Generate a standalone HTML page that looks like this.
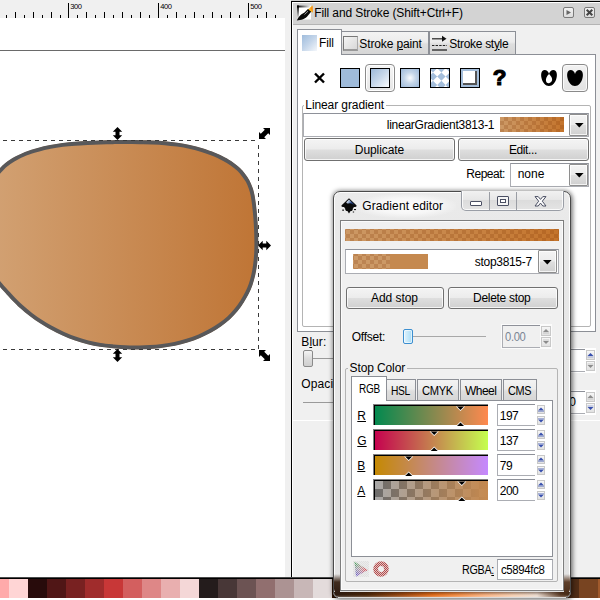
<!DOCTYPE html>
<html><head><meta charset="utf-8"><title>Inkscape</title>
<style>

html,body{margin:0;padding:0}
body{width:600px;height:600px;overflow:hidden;position:relative;background:#f0f0f0;font-family:"Liberation Sans",sans-serif;font-size:12px;color:#000}
div,span.t,svg{position:absolute;box-sizing:border-box}
span.t{white-space:nowrap;display:block}
u{text-decoration:underline;text-underline-offset:1px}
.btn{border:1px solid #707070;border-radius:3px;background:linear-gradient(#f4f4f4 0%,#ececec 48%,#dedede 52%,#d0d0d0 100%);box-shadow:inset 0 0 0 1px rgba(255,255,255,.75)}
.entry{background:#fff;border:1px solid #abadb3;border-top-color:#8e9199}
.sp{border:1px solid #c8c8c8;background:linear-gradient(#f6f6f6,#e2e2e2)}
.chk{background-image:repeating-conic-gradient(rgba(125,50,0,.2) 0% 25%,transparent 0% 50%),linear-gradient(90deg,var(--a,#cc9966),var(--b,#cc9966));background-size:8px 8px,100% 100%}
.chka{background-image:linear-gradient(90deg,rgba(197,137,79,0),rgba(197,137,79,1)),repeating-conic-gradient(#6c6c6c 0% 25%,#a8a8a8 0% 50%);background-size:100% 100%,16px 16px;background-position:0 0,1px 1px}
</style></head>
<body>
<svg width="285" height="577" viewBox="0 0 285 577" style="left:0;top:0">
<defs><linearGradient id="lg" gradientUnits="userSpaceOnUse" x1="-25" y1="0" x2="262" y2="0"><stop offset="0" stop-color="#d3a477"/><stop offset="1" stop-color="#bf7434"/></linearGradient>
<clipPath id="cp"><path d="M-12.00,182.00C-11.00,165.75 -8.00,176.83 -6.00,174.50C-4.00,172.17 -1.83,169.88 0.00,168.00C1.83,166.12 2.92,164.92 5.00,163.25C7.08,161.58 9.17,159.88 12.50,158.00C15.83,156.12 20.83,153.67 25.00,152.00C29.17,150.33 33.33,149.17 37.50,148.00C41.67,146.83 45.83,145.83 50.00,145.00C54.17,144.17 58.33,143.54 62.50,143.00C66.67,142.46 70.83,142.08 75.00,141.75C79.17,141.42 83.33,141.21 87.50,141.00C91.67,140.79 95.83,140.62 100.00,140.50C104.17,140.38 108.33,140.32 112.50,140.25C116.67,140.18 120.42,140.10 125.00,140.10C129.58,140.10 135.42,140.18 140.00,140.25C144.58,140.32 148.33,140.33 152.50,140.50C156.67,140.67 160.83,140.88 165.00,141.25C169.17,141.62 173.33,142.12 177.50,142.75C181.67,143.38 185.83,144.08 190.00,145.00C194.17,145.92 198.33,146.96 202.50,148.25C206.67,149.54 211.25,151.21 215.00,152.75C218.75,154.29 222.08,155.96 225.00,157.50C227.92,159.04 230.00,160.25 232.50,162.00C235.00,163.75 237.92,166.04 240.00,168.00C242.08,169.96 243.46,171.75 245.00,173.75C246.54,175.75 248.00,177.71 249.25,180.00C250.50,182.29 251.62,185.00 252.50,187.50C253.38,190.00 253.92,192.08 254.50,195.00C255.08,197.92 255.54,201.25 256.00,205.00C256.46,208.75 256.92,213.33 257.25,217.50C257.58,221.67 257.82,225.83 258.00,230.00C258.18,234.17 258.26,239.50 258.30,242.50C258.34,245.50 258.30,245.92 258.25,248.00C258.20,250.08 258.21,252.17 258.00,255.00C257.79,257.83 257.46,261.67 257.00,265.00C256.54,268.33 256.00,271.67 255.25,275.00C254.50,278.33 253.58,281.88 252.50,285.00C251.42,288.12 250.21,290.83 248.75,293.75C247.29,296.67 245.62,299.58 243.75,302.50C241.88,305.42 239.79,308.46 237.50,311.25C235.21,314.04 232.71,316.75 230.00,319.25C227.29,321.75 224.38,324.04 221.25,326.25C218.12,328.46 214.79,330.54 211.25,332.50C207.71,334.46 203.96,336.33 200.00,338.00C196.04,339.67 191.67,341.21 187.50,342.50C183.33,343.79 179.17,344.88 175.00,345.75C170.83,346.62 166.67,347.21 162.50,347.75C158.33,348.29 153.75,348.73 150.00,349.00C146.25,349.27 144.17,349.36 140.00,349.40C135.83,349.44 129.58,349.44 125.00,349.25C120.42,349.06 116.67,348.67 112.50,348.25C108.33,347.83 104.17,347.42 100.00,346.75C95.83,346.08 91.67,345.29 87.50,344.25C83.33,343.21 79.17,341.96 75.00,340.50C70.83,339.04 66.67,337.38 62.50,335.50C58.33,333.62 53.75,331.29 50.00,329.25C46.25,327.21 43.33,325.42 40.00,323.25C36.67,321.08 33.33,318.79 30.00,316.25C26.67,313.71 22.92,310.58 20.00,308.00C17.08,305.42 15.00,303.33 12.50,300.75C10.00,298.17 7.08,294.79 5.00,292.50C2.92,290.21 1.83,289.08 0.00,287.00C-1.83,284.92 -4.00,282.50 -6.00,280.00C-8.00,277.50 -11.00,288.33 -12.00,272.00C-13.00,255.67 -13.00,198.25 -12.00,182.00Z"/></clipPath></defs>
<rect x="0" y="0" width="285" height="18" fill="#f0f0f0"/>
<rect x="0" y="18" width="285" height="559" fill="#fff"/>
<g fill="#000"><rect x="60" y="15" width="1" height="3"/><rect x="51" y="12" width="1" height="6"/><rect x="42" y="15" width="1" height="3"/><rect x="33" y="12" width="1" height="6"/><rect x="24" y="15" width="1" height="3"/><rect x="15" y="12" width="1" height="6"/><rect x="6" y="15" width="1" height="3"/><rect x="68" y="3" width="1" height="15"/><rect x="77" y="15" width="1" height="3"/><rect x="86" y="12" width="1" height="6"/><rect x="95" y="15" width="1" height="3"/><rect x="104" y="12" width="1" height="6"/><rect x="113" y="15" width="1" height="3"/><rect x="122" y="12" width="1" height="6"/><rect x="131" y="15" width="1" height="3"/><rect x="140" y="12" width="1" height="6"/><rect x="149" y="15" width="1" height="3"/><rect x="158" y="3" width="1" height="15"/><rect x="167" y="15" width="1" height="3"/><rect x="176" y="12" width="1" height="6"/><rect x="185" y="15" width="1" height="3"/><rect x="194" y="12" width="1" height="6"/><rect x="203" y="15" width="1" height="3"/><rect x="212" y="12" width="1" height="6"/><rect x="221" y="15" width="1" height="3"/><rect x="230" y="12" width="1" height="6"/><rect x="239" y="15" width="1" height="3"/><rect x="248" y="3" width="1" height="15"/><rect x="257" y="15" width="1" height="3"/><rect x="266" y="12" width="1" height="6"/><rect x="275" y="15" width="1" height="3"/></g>
<g font-family="Liberation Sans, sans-serif" font-size="7.6" fill="#000" textLength="11.5"><text x="70.3" y="9.3" textLength="11.6">300</text><text x="160.3" y="9.3" textLength="11.6">400</text><text x="250.3" y="9.3" textLength="11.6">500</text></g>
<rect x="0" y="50" width="285" height="1" fill="#6a6a6a"/>
<path d="M-12.00,182.00C-11.00,165.75 -8.00,176.83 -6.00,174.50C-4.00,172.17 -1.83,169.88 0.00,168.00C1.83,166.12 2.92,164.92 5.00,163.25C7.08,161.58 9.17,159.88 12.50,158.00C15.83,156.12 20.83,153.67 25.00,152.00C29.17,150.33 33.33,149.17 37.50,148.00C41.67,146.83 45.83,145.83 50.00,145.00C54.17,144.17 58.33,143.54 62.50,143.00C66.67,142.46 70.83,142.08 75.00,141.75C79.17,141.42 83.33,141.21 87.50,141.00C91.67,140.79 95.83,140.62 100.00,140.50C104.17,140.38 108.33,140.32 112.50,140.25C116.67,140.18 120.42,140.10 125.00,140.10C129.58,140.10 135.42,140.18 140.00,140.25C144.58,140.32 148.33,140.33 152.50,140.50C156.67,140.67 160.83,140.88 165.00,141.25C169.17,141.62 173.33,142.12 177.50,142.75C181.67,143.38 185.83,144.08 190.00,145.00C194.17,145.92 198.33,146.96 202.50,148.25C206.67,149.54 211.25,151.21 215.00,152.75C218.75,154.29 222.08,155.96 225.00,157.50C227.92,159.04 230.00,160.25 232.50,162.00C235.00,163.75 237.92,166.04 240.00,168.00C242.08,169.96 243.46,171.75 245.00,173.75C246.54,175.75 248.00,177.71 249.25,180.00C250.50,182.29 251.62,185.00 252.50,187.50C253.38,190.00 253.92,192.08 254.50,195.00C255.08,197.92 255.54,201.25 256.00,205.00C256.46,208.75 256.92,213.33 257.25,217.50C257.58,221.67 257.82,225.83 258.00,230.00C258.18,234.17 258.26,239.50 258.30,242.50C258.34,245.50 258.30,245.92 258.25,248.00C258.20,250.08 258.21,252.17 258.00,255.00C257.79,257.83 257.46,261.67 257.00,265.00C256.54,268.33 256.00,271.67 255.25,275.00C254.50,278.33 253.58,281.88 252.50,285.00C251.42,288.12 250.21,290.83 248.75,293.75C247.29,296.67 245.62,299.58 243.75,302.50C241.88,305.42 239.79,308.46 237.50,311.25C235.21,314.04 232.71,316.75 230.00,319.25C227.29,321.75 224.38,324.04 221.25,326.25C218.12,328.46 214.79,330.54 211.25,332.50C207.71,334.46 203.96,336.33 200.00,338.00C196.04,339.67 191.67,341.21 187.50,342.50C183.33,343.79 179.17,344.88 175.00,345.75C170.83,346.62 166.67,347.21 162.50,347.75C158.33,348.29 153.75,348.73 150.00,349.00C146.25,349.27 144.17,349.36 140.00,349.40C135.83,349.44 129.58,349.44 125.00,349.25C120.42,349.06 116.67,348.67 112.50,348.25C108.33,347.83 104.17,347.42 100.00,346.75C95.83,346.08 91.67,345.29 87.50,344.25C83.33,343.21 79.17,341.96 75.00,340.50C70.83,339.04 66.67,337.38 62.50,335.50C58.33,333.62 53.75,331.29 50.00,329.25C46.25,327.21 43.33,325.42 40.00,323.25C36.67,321.08 33.33,318.79 30.00,316.25C26.67,313.71 22.92,310.58 20.00,308.00C17.08,305.42 15.00,303.33 12.50,300.75C10.00,298.17 7.08,294.79 5.00,292.50C2.92,290.21 1.83,289.08 0.00,287.00C-1.83,284.92 -4.00,282.50 -6.00,280.00C-8.00,277.50 -11.00,288.33 -12.00,272.00C-13.00,255.67 -13.00,198.25 -12.00,182.00Z" fill="url(#lg)" stroke="#58585a" stroke-width="7.8" clip-path="url(#cp)"/>
<g stroke="#3a3a3a" stroke-width="1" fill="none" stroke-dasharray="4 4" shape-rendering="crispEdges"><path d="M-1,140.5H259" stroke-dashoffset="4"/><path d="M258.5,141V349" stroke-dashoffset="4"/><path d="M-1,349.5H259" stroke-dashoffset="4"/></g>
<g fill="#000"><path d="M117.5,127 l4.7,4.7 h-2.7 v3.6 h2.7 l-4.7,4.7 l-4.7,-4.7 h2.7 v-3.6 h-2.7z"/><path d="M117.5,349 l4.7,4.7 h-2.7 v3.6 h2.7 l-4.7,4.7 l-4.7,-4.7 h2.7 v-3.6 h-2.7z"/><path d="M258,245.5 l4.7,-4.7 v2.7 h3.6 v-2.7 l4.7,4.7 l-4.7,4.7 v-2.7 h-3.6 v2.7z"/><path transform="translate(259,128)" d="M4,0 H11 V7 L9.200,5.200 L5.200,9.200 L7,11 H0 V4 L1.800,5.800 L5.800,1.800z"/><path transform="translate(270,350) scale(-1,1)" d="M4,0 H11 V7 L9.200,5.200 L5.200,9.200 L7,11 H0 V4 L1.800,5.800 L5.800,1.800z"/></g>
</svg>
<div style="left:291px;top:1px;width:1px;height:577px;background:#000"></div>
<div style="left:292px;top:2px;width:1px;height:575px;background:#fff"></div>
<div style="left:291px;top:0px;width:309px;height:1px;background:#cfcfcf"></div>
<div style="left:291px;top:1px;width:309px;height:1px;background:#000"></div>
<div style="left:292px;top:2px;width:308px;height:1px;background:#fff"></div>
<div style="left:293px;top:3px;width:307px;height:21px;background:#d3d3d3"></div>
<div style="left:293px;top:24px;width:307px;height:1px;background:#b4b4b4"></div>
<svg width="17" height="17" viewBox="0 0 17 17" style="left:296px;top:4px">
<defs><linearGradient id="ti1" x1="0" y1="0" x2="1" y2="0"><stop offset="0" stop-color="#000"/><stop offset="1" stop-color="#000" stop-opacity="0"/></linearGradient>
<linearGradient id="ti2" x1="0" y1="0" x2="0" y2="1"><stop offset="0" stop-color="#000"/><stop offset="1" stop-color="#000" stop-opacity="0"/></linearGradient></defs>
<rect x="1" y="1.5" width="14" height="14" fill="#fff"/>
<rect x="1" y="1.5" width="14" height="2" fill="url(#ti1)"/><rect x="1" y="1.5" width="2" height="14" fill="url(#ti2)"/>
<path d="M0.800,16.400 C3.500,11 6.500,9.500 8.500,8.500 L12.200,4.800 L15.300,7.600 L12,11.500 C9.500,15 5,16.200 0.800,16.400z" fill="#0a0a0a"/>
<path d="M12.3,5.6 L16.5,1.2 L16.8,8.8z" fill="#fdb515"/><path d="M14.5,4 L16.6,2 L16.8,8.4z" fill="#f68b1f"/>
<path d="M8.5,10.5 L12,7.2" stroke="#999" stroke-width="1"/>
</svg>
<span class="t" style="left:314.3px;top:6px;line-height:14px;letter-spacing:-0.118px;">Fill and Stroke (Shift+Ctrl+F)</span>
<div style="left:563px;top:7px;width:11px;height:11px;border:1px solid #7a7a7a;border-radius:2px;background:linear-gradient(#f2f2f2,#dcdcdc)"></div>
<svg width="11" height="11" style="left:563px;top:7px"><path d="M3.5,3 L8,5.5 L3.5,8z" fill="#666"/></svg>
<div style="left:584px;top:7px;width:11px;height:11px;border:1px solid #7a7a7a;border-radius:2px;background:linear-gradient(#f2f2f2,#dcdcdc)"></div>
<svg width="11" height="11" style="left:584px;top:7px"><path d="M2.7,2.7 L8.3,8.3 M8.3,2.7 L2.7,8.3" stroke="#444" stroke-width="2"/></svg>
<div style="left:297px;top:54px;width:299px;height:278px;background:#fff;border:1px solid #8c8f96"></div>
<div style="left:297px;top:29px;width:45px;height:26px;background:#fff;border:1px solid #8c8f96;border-bottom:none"></div>
<div style="left:341px;top:31px;width:88px;height:24px;background:linear-gradient(#f3f3f3,#ececec 45%,#dedede 55%,#d6d6d6);border:1px solid #8c8f96"></div>
<div style="left:429px;top:31px;width:87px;height:24px;background:linear-gradient(#f3f3f3,#ececec 45%,#dedede 55%,#d6d6d6);border:1px solid #8c8f96"></div>
<div style="left:302px;top:35px;width:15px;height:16px;background:linear-gradient(135deg,#9fbcdc 0%,#c5d6ea 50%,#f4f7fb 100%)"></div>
<div style="left:343px;top:36px;width:15px;height:15px;border:1px solid #777;border-right-color:#aaa;border-bottom:2px solid #999;background:linear-gradient(135deg,#f4f4f4,#d8d8d8)"></div>
<svg width="17" height="16" style="left:431px;top:35px"><path d="M1,3.8H12" stroke="#222" stroke-width="1.2"/><path d="M11,0.8 L15.5,3.8 L11,6.8z" fill="#111"/><path d="M1,10.5H16" stroke="#222" stroke-width="1.2" stroke-dasharray="2.4 1.2"/><path d="M1,15H16" stroke="#555" stroke-width="1.8"/></svg>
<span class="t" style="left:318.9px;top:36px;line-height:14px;letter-spacing:-0.082px;">Fill</span>
<span class="t" style="left:359.3px;top:37px;line-height:14px;letter-spacing:-0.129px;">Stroke <u>p</u>aint</span>
<span class="t" style="left:449.3px;top:37px;line-height:14px;letter-spacing:-0.309px;">Stroke st<u>y</u>le</span>
<svg width="20" height="20" style="left:310px;top:68px"><path d="M5,5.5 L14,14.5 M14,5.5 L5,14.5" stroke="#000" stroke-width="2.4"/></svg>
<div style="left:340px;top:68px;width:20px;height:20px;border:1px solid #000;background:#9fbbda"></div>
<div style="left:365px;top:64px;width:30px;height:28px;border:1px solid #8a8a8a;border-radius:4px;background:linear-gradient(#f6f6f6,#e6e6e6);box-shadow:inset 0 0 0 1px #fff"></div>
<div style="left:370px;top:68px;width:20px;height:20px;border:1px solid #000;background:linear-gradient(135deg,#9db9d9 0%,#c8d8ea 50%,#fafcfe 100%)"></div>
<div style="left:400px;top:68px;width:20px;height:20px;border:1px solid #000;background:radial-gradient(circle at 50% 50%,#fafcfe 0%,#c4d5e8 45%,#9db9d9 100%)"></div>
<svg width="20" height="20" style="left:430px;top:68px"><rect x=".5" y=".5" width="19" height="19" fill="#fff" stroke="#000"/><defs><clipPath id="pc"><rect x="1" y="1" width="18" height="18"/></clipPath></defs><g fill="#a4bedb" clip-path="url(#pc)"><path d="M-5.4,-4.0 l4.200,4.200 l-4.200,4.200 l-4.200,-4.200z M-5.4,4.4 l4.200,4.200 l-4.200,4.200 l-4.200,-4.200z M-5.4,12.8 l4.200,4.200 l-4.200,4.200 l-4.200,-4.200z M-5.4,21.2 l4.200,4.200 l-4.200,4.200 l-4.200,-4.200z M3.0,-4.0 l4.200,4.200 l-4.200,4.200 l-4.200,-4.200z M3.0,4.4 l4.200,4.200 l-4.200,4.200 l-4.200,-4.200z M3.0,12.8 l4.200,4.200 l-4.200,4.200 l-4.200,-4.200z M3.0,21.2 l4.200,4.200 l-4.200,4.200 l-4.200,-4.200z M11.4,-4.0 l4.200,4.200 l-4.200,4.200 l-4.200,-4.200z M11.4,4.4 l4.200,4.200 l-4.200,4.200 l-4.200,-4.200z M11.4,12.8 l4.200,4.200 l-4.200,4.200 l-4.200,-4.200z M11.4,21.2 l4.200,4.200 l-4.200,4.200 l-4.200,-4.200z M19.8,-4.0 l4.200,4.200 l-4.200,4.200 l-4.200,-4.200z M19.8,4.4 l4.200,4.200 l-4.200,4.200 l-4.200,-4.200z M19.8,12.8 l4.200,4.200 l-4.200,4.200 l-4.200,-4.200z M19.8,21.2 l4.200,4.200 l-4.200,4.200 l-4.200,-4.200z"/></g></svg>
<div style="left:460px;top:68px;width:20px;height:20px;border:1px solid #000;background:#a4bedb"></div>
<div style="left:463px;top:71px;width:14px;height:14px;background:#fff;border-right:2px solid #555;border-bottom:2px solid #555"></div>
<span class="t" style="left:492.7px;top:66px;line-height:24.5px;font-size:22.5px;font-weight:700;-webkit-text-stroke:1.1px #000;">?</span>
<svg width="18" height="18" style="left:540px;top:69px"><path fill-rule="evenodd" d="M4.5,1 C7,1 8.5,3 9,5 C9.5,3 11,1 13.5,1 C16.5,1 17.5,5 16.5,9 C15.5,13.5 12.5,17 9,17 C5.5,17 2.500,13.5 1.5,9 C0.500,5 1.500,1 4.500,1z M9,5 C6.5,7.5 5.5,10 6,12 C6.5,14 8,14.5 9.5,14 C11.5,13.5 12.5,11.500 12,9.5 C11.500,7.500 10,6 9,5z" fill="#000"/></svg>
<div style="left:562px;top:64px;width:26px;height:28px;border:1px solid #8a8a8a;border-radius:4px;background:linear-gradient(#f2f2f2,#e2e2e2);box-shadow:inset 0 0 0 1px #fafafa"></div>
<svg width="18" height="18" style="left:566px;top:69px"><path d="M4.5,1 C7,1 8.500,3 9,5 C9.500,3 11,1 13.500,1 C16.500,1 17.500,5 16.500,9 C15.500,13.500 12.500,17 9,17 C5.500,17 2.500,13.500 1.500,9 C0.500,5 1.500,1 4.500,1z" fill="#000"/></svg>
<div style="left:302px;top:105px;width:289px;height:222px;border:1px solid #b4b4b4;border-radius:2px"></div>
<div style="left:304px;top:98px;width:82px;height:14px;background:#fff"></div>
<span class="t" style="left:305.3px;top:98px;line-height:14px;letter-spacing:-0.091px;">Linear gradient</span>
<div class="entry" style="left:303px;top:113px;width:286px;height:24px;"></div>
<span class="t" style="left:386.8px;top:118px;line-height:14px;letter-spacing:-0.263px;">linearGradient3813-1</span>
<div class="chk" style="left:500px;top:117px;width:64px;height:15px;--a:#cc9966;--b:#c4742c"></div>
<div class="btn" style="left:569px;top:114px;width:19px;height:22px;border-color:#8e8e8e;border-radius:1px"></div>
<svg width="9" height="5" style="left:574.500px;top:122.500px"><path d="M0,0H8.600L4.300,4.600z" fill="#000"/></svg>
<div class="btn" style="left:304px;top:138px;width:151px;height:23px;"></div>
<span class="t" style="left:354.8px;top:143px;line-height:14px;letter-spacing:-0.081px;">Duplicate</span>
<div class="btn" style="left:458px;top:138px;width:131px;height:23px;"></div>
<span class="t" style="left:508.9px;top:143px;line-height:14px;letter-spacing:-0.384px;">Edit...</span>
<span class="t" style="left:466.3px;top:167px;line-height:14px;letter-spacing:-0.490px;">Repeat:</span>
<div class="entry" style="left:510px;top:163px;width:79px;height:24px;"></div>
<span class="t" style="left:517.7px;top:167px;line-height:14px;letter-spacing:-0.026px;">none</span>
<div class="btn" style="left:569px;top:164px;width:19px;height:22px;border-color:#8e8e8e;border-radius:1px"></div>
<svg width="9" height="5" style="left:574.500px;top:172.500px"><path d="M0,0H8.600L4.300,4.600z" fill="#000"/></svg>
<span class="t" style="left:301.3px;top:335px;line-height:14px;letter-spacing:0.062px;">B<u>l</u>ur:</span>
<div style="left:309px;top:358px;width:30px;height:1px;background:#9a9a9a"></div>
<div style="left:303px;top:350px;width:10px;height:17px;border:1px solid #8a8a8a;border-radius:2px;background:linear-gradient(#f4f4f4,#dcdcdc 50%,#cfcfcf)"></div>
<span class="t" style="left:301.3px;top:377px;line-height:14px;letter-spacing:0.123px;">Opacity:</span>
<div style="left:303px;top:402px;width:40px;height:1px;background:#9a9a9a"></div>
<div style="left:292px;top:420px;width:308px;height:1px;background:#fff"></div>
<div style="left:560px;top:348px;width:36px;height:25px;background:#fff"></div>
<div class="entry" style="left:560px;top:349px;width:25px;height:23px;background:#fff;border-right:none;"></div><div class="sp" style="left:586px;top:350px;width:9px;height:10px;"></div><svg width="9" height="10" style="left:586px;top:350px"><path d="M1.5,6.0 L4.5,3.0 L7.5,6.0z" fill="#3850ae"/><path d="M1.5,7.0H7.5" stroke="#3850ae" stroke-opacity=".4"/></svg><div class="sp" style="left:586px;top:361px;width:9px;height:10px;"></div><svg width="9" height="10" style="left:586px;top:361px"><path d="M1.5,4.0 L4.5,7.0 L7.5,4.0z" fill="#8c8c8c"/><path d="M1.5,3.0H7.5" stroke="#8c8c8c" stroke-opacity=".4"/></svg>
<div style="left:560px;top:390px;width:36px;height:25px;background:#fff"></div>
<div class="entry" style="left:560px;top:391px;width:25px;height:23px;background:#fff;border-right:none;"></div><div class="sp" style="left:586px;top:392px;width:9px;height:10px;"></div><svg width="9" height="10" style="left:586px;top:392px"><path d="M1.5,6.0 L4.5,3.0 L7.5,6.0z" fill="#8c8c8c"/><path d="M1.5,7.0H7.5" stroke="#8c8c8c" stroke-opacity=".4"/></svg><div class="sp" style="left:586px;top:403px;width:9px;height:10px;"></div><svg width="9" height="10" style="left:586px;top:403px"><path d="M1.5,4.0 L4.5,7.0 L7.5,4.0z" fill="#3850ae"/><path d="M1.5,3.0H7.5" stroke="#3850ae" stroke-opacity=".4"/></svg>
<span class="t" style="left:569.3px;top:395px;line-height:14px;">0</span>
<div style="left:0px;top:577px;width:600px;height:1px;background:#4a4a4a"></div>
<div style="left:0px;top:578px;width:600px;height:1px;background:#000"></div>
<div style="left:-10px;top:579px;width:19px;height:19px;background:#ffaaaa"></div><div style="left:9px;top:579px;width:19px;height:19px;background:#ffd5d5"></div><div style="left:28px;top:579px;width:19px;height:19px;background:#280b0b"></div><div style="left:47px;top:579px;width:19px;height:19px;background:#501616"></div><div style="left:66px;top:579px;width:19px;height:19px;background:#782121"></div><div style="left:85px;top:579px;width:19px;height:19px;background:#a02c2c"></div><div style="left:104px;top:579px;width:19px;height:19px;background:#c83737"></div><div style="left:123px;top:579px;width:19px;height:19px;background:#d35f5f"></div><div style="left:142px;top:579px;width:19px;height:19px;background:#de8787"></div><div style="left:161px;top:579px;width:19px;height:19px;background:#e9afaf"></div><div style="left:180px;top:579px;width:19px;height:19px;background:#f4d7d7"></div><div style="left:199px;top:579px;width:19px;height:19px;background:#241c1c"></div><div style="left:218px;top:579px;width:19px;height:19px;background:#483737"></div><div style="left:237px;top:579px;width:19px;height:19px;background:#6c5353"></div><div style="left:256px;top:579px;width:19px;height:19px;background:#916f6f"></div><div style="left:275px;top:579px;width:19px;height:19px;background:#ac9393"></div><div style="left:294px;top:579px;width:19px;height:19px;background:#c8b7b7"></div><div style="left:313px;top:579px;width:19px;height:19px;background:#e3dbdb"></div><div style="left:332px;top:579px;width:19px;height:19px;background:#2b1100"></div><div style="left:351px;top:579px;width:19px;height:19px;background:#552200"></div><div style="left:370px;top:579px;width:19px;height:19px;background:#803300"></div><div style="left:389px;top:579px;width:19px;height:19px;background:#aa4400"></div><div style="left:408px;top:579px;width:19px;height:19px;background:#d45500"></div><div style="left:427px;top:579px;width:19px;height:19px;background:#ff6600"></div><div style="left:446px;top:579px;width:19px;height:19px;background:#ff7f2a"></div><div style="left:465px;top:579px;width:19px;height:19px;background:#ff9955"></div><div style="left:484px;top:579px;width:19px;height:19px;background:#ffb380"></div><div style="left:503px;top:579px;width:19px;height:19px;background:#ffccaa"></div><div style="left:522px;top:579px;width:19px;height:19px;background:#ffe6d5"></div><div style="left:541px;top:579px;width:19px;height:19px;background:#28170b"></div><div style="left:560px;top:579px;width:19px;height:19px;background:#502d16"></div><div style="left:579px;top:579px;width:19px;height:19px;background:#784421"></div><div style="left:598px;top:579px;width:19px;height:19px;background:#a05a2c"></div>
<div style="left:0px;top:598px;width:600px;height:2px;background:#fff"></div>
<div style="left:333px;top:191px;width:238px;height:407px;border-radius:7px 7px 6px 6px;background:#e9e9e9;box-shadow:0 0 4px 1px rgba(0,0,0,.35),2px 2px 5px 0 rgba(0,0,0,.3)"></div>
<div style="left:333px;top:191px;width:238px;height:407px;border-radius:7px 7px 6px 6px;border:1px solid #4a4a4a;background:linear-gradient(180deg,#ebebeb 0,#e9e9e9 30px,#e2e2e2 100%);box-shadow:inset 0 0 0 1px rgba(255,255,255,.9)"></div>
<div style="left:334px;top:592px;width:236px;height:5px;border-radius:0 0 5px 5px;background:linear-gradient(90deg,#2e1c12 0,#4a2608 14%,#a04a10 30%,#e06a18 42%,#f08a40 52%,#f6b080 64%,#f3cdb0 76%,#e8d8cc 86%,#5a3a24 96%,#4a2e1a 100%)"></div>
<div style="left:334px;top:592px;width:236px;height:5px;border-radius:0 0 5px 5px;background:linear-gradient(180deg,rgba(40,20,10,.45),rgba(40,20,10,0) 60%,rgba(255,255,255,.25))"></div>
<div style="left:338px;top:597px;width:228px;height:1px;background:rgba(255,255,255,.8)"></div>
<div style="left:334px;top:574px;width:6px;height:20px;border-radius:0 0 0 5px;background:linear-gradient(180deg,rgba(56,34,20,0),rgba(56,34,20,.95) 40%,#2e1c12)"></div>
<div style="left:564px;top:574px;width:6px;height:20px;border-radius:0 0 5px 0;background:linear-gradient(180deg,rgba(80,45,22,0),rgba(80,45,22,.9) 40%,#4a2e1a)"></div>
<div style="left:356px;top:194px;width:100px;height:24px;background:radial-gradient(ellipse at 50% 50%,rgba(255,255,255,.95) 0,rgba(255,255,255,.6) 45%,rgba(255,255,255,0) 75%)"></div>
<svg width="16" height="16" viewBox="0 0 16 16" style="left:341px;top:198px">
<defs><linearGradient id="ik" gradientUnits="userSpaceOnUse" x1="6" y1="2" x2="13" y2="7"><stop offset="0" stop-color="#f4f6fa"/><stop offset=".3" stop-color="#9fb2d0"/><stop offset=".6" stop-color="#27488a"/><stop offset="1" stop-color="#0a1a38"/></linearGradient></defs>
<path d="M8,0.200 L15.400,7.200 C15.900,7.900 15.300,9 14.200,9 L1.800,9 C0.700,9 0.100,7.900 0.600,7.200z" fill="#0a0a0a"/>
<path d="M8,1.600 L13.600,6.700 C12,7 10.800,5.400 9.200,5.200 C7.800,5 7.200,5.800 6,5.300 C5.400,5 5.600,4.200 5.200,4.200z" fill="url(#ik)"/>
<path d="M2.400,8 H13.600 L11.300,11.500 H12.300 L10.600,13 H9.600 L8,15.500 L6.400,13 H5.400 L3.700,11.500 H4.700z" fill="#0a0a0a"/>
<rect x="1.200" y="11.600" width="1.800" height="1.100" fill="#111"/><rect x="13" y="11" width="2" height="1.100" fill="#111"/><rect x="11.800" y="13.500" width="1.300" height="1" fill="#111"/>
</svg>
<span class="t" style="left:362.3px;top:199px;line-height:14px;letter-spacing:0.094px;">Gradient editor</span>
<div style="left:461px;top:191px;width:103px;height:20px;border:1px solid #9a9ea6;border-top:none;border-radius:0 0 5px 5px;background:linear-gradient(#f1f1f1,#e6e6e6 50%,#dcdcdc 50%,#e4e4e4);box-shadow:inset 0 -1px 0 rgba(255,255,255,.8),inset 1px 0 0 rgba(255,255,255,.8),inset -1px 0 0 rgba(255,255,255,.8)"></div>
<div style="left:489px;top:192px;width:1px;height:18px;background:#9a9da4"></div>
<div style="left:516px;top:192px;width:1px;height:18px;background:#9a9da4"></div>
<div style="left:470px;top:201px;width:12px;height:5px;border:1px solid #4a4f63;border-radius:1px;background:#fff"></div>
<div style="left:497px;top:196px;width:12px;height:10px;border:1px solid #4a4f63;border-radius:1px;background:#f4f4f4"></div>
<div style="left:500px;top:199px;width:6px;height:4px;border:1px solid #4a4f63;background:#fff"></div>
<svg width="13" height="11" style="left:534px;top:196px"><path d="M1,.6 H4.200 L6.500,3.400 L8.800,.6 H12 L8.300,5.200 L12,10 H8.800 L6.500,7.100 L4.200,10 H1 L4.700,5.200z" fill="#fdfdfd" stroke="#4a4f63" stroke-width="1" stroke-linejoin="round"/></svg>
<div style="left:340px;top:220px;width:224px;height:371px;background:#f0f0f0;border:1px solid #7d7d7d;box-shadow:inset 0 0 0 1px #fbfbfb"></div>
<div class="chk" style="left:345px;top:229px;width:214px;height:12px;--a:#cc9966;--b:#c4742c;background-position:1px 1px,0 0"></div>
<div class="entry" style="left:345px;top:249px;width:214px;height:25px;"></div>
<div class="chk" style="left:353px;top:254px;width:37px;height:15px;background-position:1px 2px,0 0"></div>
<div style="left:390px;top:254px;width:38px;height:15px;background:#c5894f"></div>
<span class="t" style="left:474.8px;top:255px;line-height:14px;letter-spacing:-0.305px;">stop3815-7</span>
<div class="btn" style="left:538px;top:250px;width:19px;height:23px;border-color:#8e8e8e;border-radius:1px"></div>
<svg width="9" height="5" style="left:543px;top:260px"><path d="M0,0H8.600L4.300,4.600z" fill="#000"/></svg>
<div class="btn" style="left:346px;top:287px;width:98px;height:22px;"></div>
<span class="t" style="left:371.0px;top:291px;line-height:14px;letter-spacing:-0.047px;">Add stop</span>
<div class="btn" style="left:448px;top:287px;width:110px;height:22px;"></div>
<span class="t" style="left:473.0px;top:291px;line-height:14px;letter-spacing:-0.291px;">Delete stop</span>
<span class="t" style="left:351.8px;top:330px;line-height:14px;letter-spacing:-0.263px;">Offset:</span>
<div style="left:408px;top:336px;width:78px;height:1px;background:#a8a8a8"></div>
<div style="left:403px;top:329px;width:10px;height:15px;border:1px solid #3c8fd0;border-radius:2px;background:linear-gradient(90deg,#dff3fd,#a9dcf6);box-shadow:inset 0 0 0 1px rgba(255,255,255,.6)"></div>
<div style="left:501px;top:324px;width:51px;height:25px;background:#fbfbfb"></div>
<div class="entry" style="left:502px;top:325px;width:38px;height:23px;background:#f0f0f0;border-right:none;"></div><div class="sp" style="left:541px;top:326px;width:10px;height:10px;"></div><svg width="10" height="10" style="left:541px;top:326px"><path d="M2.0,6.0 L5.0,3.0 L8.0,6.0z" fill="#8c8c8c"/><path d="M2.0,7.0H8.0" stroke="#8c8c8c" stroke-opacity=".4"/></svg><div class="sp" style="left:541px;top:337px;width:10px;height:10px;"></div><svg width="10" height="10" style="left:541px;top:337px"><path d="M2.0,4.0 L5.0,7.0 L8.0,4.0z" fill="#8c8c8c"/><path d="M2.0,3.0H8.0" stroke="#8c8c8c" stroke-opacity=".4"/></svg>
<span class="t" style="left:505.1px;top:330px;line-height:14px;color:#7a8594;letter-spacing:-0.350px;transform:scaleX(0.934);transform-origin:0 0;">0.00</span>
<div style="left:345px;top:368px;width:213px;height:214px;border:1px solid #b4b4b4;border-radius:2px"></div>
<div style="left:348px;top:361px;width:59px;height:14px;background:#f0f0f0"></div>
<span class="t" style="left:349.6px;top:361px;line-height:14px;letter-spacing:-0.120px;">Stop Color</span>
<div style="left:351px;top:400px;width:202px;height:157px;background:#fff;border:1px solid #8c8f96"></div>
<div style="left:386px;top:379px;width:30px;height:22px;background:linear-gradient(#f3f3f3,#ececec 45%,#dedede 55%,#d6d6d6);border:1px solid #8c8f96"></div>
<div style="left:417px;top:379px;width:42px;height:22px;background:linear-gradient(#f3f3f3,#ececec 45%,#dedede 55%,#d6d6d6);border:1px solid #8c8f96"></div>
<div style="left:460px;top:379px;width:42px;height:22px;background:linear-gradient(#f3f3f3,#ececec 45%,#dedede 55%,#d6d6d6);border:1px solid #8c8f96"></div>
<div style="left:503px;top:379px;width:34px;height:22px;background:linear-gradient(#f3f3f3,#ececec 45%,#dedede 55%,#d6d6d6);border:1px solid #8c8f96"></div>
<div style="left:351px;top:376px;width:36px;height:25px;background:#fff;border:1px solid #8c8f96;border-bottom:none"></div>
<span class="t" style="left:359.0px;top:382px;line-height:14px;letter-spacing:-0.350px;transform:scaleX(0.833);transform-origin:0 0;">RGB</span>
<span class="t" style="left:391.3px;top:384px;line-height:14px;letter-spacing:-0.350px;transform:scaleX(0.852);transform-origin:0 0;">HSL</span>
<span class="t" style="left:422.3px;top:384px;line-height:14px;letter-spacing:-0.350px;transform:scaleX(0.932);transform-origin:0 0;">CMYK</span>
<span class="t" style="left:464.9px;top:384px;line-height:14px;letter-spacing:-0.483px;">Wheel</span>
<span class="t" style="left:507.8px;top:384px;line-height:14px;letter-spacing:-0.350px;transform:scaleX(0.905);transform-origin:0 0;">CMS</span>
<div style="left:373px;top:404px;width:114.5px;height:21px;border-top:1px solid #808080;border-left:1px solid #808080;box-shadow:inset 1px 1px 0 #000;background-origin:padding-box;background:linear-gradient(90deg,#00894f,#ff894f)"></div><svg width="114" height="21" style="left:374px;top:404.5px"><g transform="translate(86.5,0)"><path d="M-4.600,1.500 H4.600 L0,6z" fill="#fff"/><path d="M-3.500,1.500 H3.500 L0,5z" fill="#000"/><path d="M-4.600,21 H4.600 L0,16.500z" fill="#fff"/><path d="M-3.500,21 H3.500 L0,17.500z" fill="#000"/></g></svg><span class="t" style="left:357.3px;top:409px;line-height:14px;"><u>R</u></span><div style="left:497px;top:404px;width:50px;height:22px;background:#fff"></div><div class="entry" style="left:497px;top:404px;width:38px;height:22px;background:#fff;border-right:none;"></div><div class="sp" style="left:537px;top:405px;width:8px;height:9px;"></div><svg width="8" height="9" style="left:537px;top:405px"><path d="M1.0,5.5 L4.0,2.5 L7.0,5.5z" fill="#3850ae"/><path d="M1.0,6.5H7.0" stroke="#3850ae" stroke-opacity=".4"/></svg><div class="sp" style="left:537px;top:416px;width:8px;height:9px;"></div><svg width="8" height="9" style="left:537px;top:416px"><path d="M1.0,3.5 L4.0,6.5 L7.0,3.5z" fill="#3850ae"/><path d="M1.0,2.5H7.0" stroke="#3850ae" stroke-opacity=".4"/></svg><span class="t" style="left:499.7px;top:409px;line-height:14px;letter-spacing:-0.477px;">197</span>
<div style="left:373px;top:429px;width:114.5px;height:21px;border-top:1px solid #808080;border-left:1px solid #808080;box-shadow:inset 1px 1px 0 #000;background-origin:padding-box;background:linear-gradient(90deg,#c5004f,#c5ff4f)"></div><svg width="114" height="21" style="left:374px;top:429.5px"><g transform="translate(60.2,0)"><path d="M-4.600,1.500 H4.600 L0,6z" fill="#fff"/><path d="M-3.500,1.500 H3.500 L0,5z" fill="#000"/><path d="M-4.600,21 H4.600 L0,16.500z" fill="#fff"/><path d="M-3.500,21 H3.500 L0,17.500z" fill="#000"/></g></svg><span class="t" style="left:357.3px;top:434px;line-height:14px;"><u>G</u></span><div style="left:497px;top:429px;width:50px;height:22px;background:#fff"></div><div class="entry" style="left:497px;top:429px;width:38px;height:22px;background:#fff;border-right:none;"></div><div class="sp" style="left:537px;top:430px;width:8px;height:9px;"></div><svg width="8" height="9" style="left:537px;top:430px"><path d="M1.0,5.5 L4.0,2.5 L7.0,5.5z" fill="#3850ae"/><path d="M1.0,6.5H7.0" stroke="#3850ae" stroke-opacity=".4"/></svg><div class="sp" style="left:537px;top:441px;width:8px;height:9px;"></div><svg width="8" height="9" style="left:537px;top:441px"><path d="M1.0,3.5 L4.0,6.5 L7.0,3.5z" fill="#3850ae"/><path d="M1.0,2.5H7.0" stroke="#3850ae" stroke-opacity=".4"/></svg><span class="t" style="left:499.7px;top:434px;line-height:14px;letter-spacing:-0.477px;">137</span>
<div style="left:373px;top:454px;width:114.5px;height:21px;border-top:1px solid #808080;border-left:1px solid #808080;box-shadow:inset 1px 1px 0 #000;background-origin:padding-box;background:linear-gradient(90deg,#c58900,#c589ff)"></div><svg width="114" height="21" style="left:374px;top:454.5px"><g transform="translate(34.7,0)"><path d="M-4.600,1.500 H4.600 L0,6z" fill="#fff"/><path d="M-3.500,1.500 H3.500 L0,5z" fill="#000"/><path d="M-4.600,21 H4.600 L0,16.500z" fill="#fff"/><path d="M-3.500,21 H3.500 L0,17.500z" fill="#000"/></g></svg><span class="t" style="left:357.3px;top:459px;line-height:14px;"><u>B</u></span><div style="left:497px;top:454px;width:50px;height:22px;background:#fff"></div><div class="entry" style="left:497px;top:454px;width:38px;height:22px;background:#fff;border-right:none;"></div><div class="sp" style="left:537px;top:455px;width:8px;height:9px;"></div><svg width="8" height="9" style="left:537px;top:455px"><path d="M1.0,5.5 L4.0,2.5 L7.0,5.5z" fill="#3850ae"/><path d="M1.0,6.5H7.0" stroke="#3850ae" stroke-opacity=".4"/></svg><div class="sp" style="left:537px;top:466px;width:8px;height:9px;"></div><svg width="8" height="9" style="left:537px;top:466px"><path d="M1.0,3.5 L4.0,6.5 L7.0,3.5z" fill="#3850ae"/><path d="M1.0,2.5H7.0" stroke="#3850ae" stroke-opacity=".4"/></svg><span class="t" style="left:499.7px;top:459px;line-height:14px;letter-spacing:-0.480px;">79</span>
<div class="chka" style="left:373px;top:479px;width:114.5px;height:21px;border-top:1px solid #808080;border-left:1px solid #808080;box-shadow:inset 1px 1px 0 #000;background-origin:padding-box;"></div><svg width="114" height="21" style="left:374px;top:479.5px"><g transform="translate(87.8,0)"><path d="M-4.600,1.500 H4.600 L0,6z" fill="#fff"/><path d="M-3.500,1.500 H3.500 L0,5z" fill="#000"/><path d="M-4.600,21 H4.600 L0,16.500z" fill="#fff"/><path d="M-3.500,21 H3.500 L0,17.500z" fill="#000"/></g></svg><span class="t" style="left:357.3px;top:484px;line-height:14px;"><u>A</u></span><div style="left:497px;top:479px;width:50px;height:22px;background:#fff"></div><div class="entry" style="left:497px;top:479px;width:38px;height:22px;background:#fff;border-right:none;"></div><div class="sp" style="left:537px;top:480px;width:8px;height:9px;"></div><svg width="8" height="9" style="left:537px;top:480px"><path d="M1.0,5.5 L4.0,2.5 L7.0,5.5z" fill="#3850ae"/><path d="M1.0,6.5H7.0" stroke="#3850ae" stroke-opacity=".4"/></svg><div class="sp" style="left:537px;top:491px;width:8px;height:9px;"></div><svg width="8" height="9" style="left:537px;top:491px"><path d="M1.0,3.5 L4.0,6.5 L7.0,3.5z" fill="#3850ae"/><path d="M1.0,2.5H7.0" stroke="#3850ae" stroke-opacity=".4"/></svg><span class="t" style="left:499.7px;top:484px;line-height:14px;letter-spacing:-0.477px;">200</span>
<svg width="16" height="16" style="left:353px;top:561px"><defs><linearGradient id="cm1" x1="0" y1="0" x2="0" y2="1"><stop offset="0" stop-color="#2c9a3c"/><stop offset=".5" stop-color="#8a8aa0"/><stop offset="1" stop-color="#4030c0"/></linearGradient><linearGradient id="cm2" x1="0" y1="0" x2="1" y2="0"><stop offset="0" stop-color="#fff" stop-opacity="0"/><stop offset="1" stop-color="#e03030"/></linearGradient></defs><rect width="16" height="16" fill="#d8d8d8" opacity=".7"/><path d="M1.500,0.500 L14.500,9 L3,15.500z" fill="url(#cm1)"/><path d="M1.500,0.500 L14.500,9 L3,15.500z" fill="url(#cm2)"/></svg>
<svg width="16" height="16" style="left:373px;top:561px"><circle cx="8" cy="8" r="5.400" fill="none" stroke="#b44a4a" stroke-width="4.800"/></svg>
<div style="left:353px;top:561px;width:36px;height:16px;background:repeating-conic-gradient(rgba(240,240,240,.75) 0% 25%,transparent 0% 50%);background-size:2px 2px"></div>
<span class="t" style="left:462.3px;top:563px;line-height:14px;letter-spacing:-0.350px;transform:scaleX(0.899);transform-origin:0 0;">RGBA<u>:</u></span>
<div class="entry" style="left:497px;top:559px;width:56px;height:21px;"></div>
<span class="t" style="left:500.9px;top:563px;line-height:14px;letter-spacing:-0.350px;transform:scaleX(0.948);transform-origin:0 0;">c5894fc8</span>
</body></html>
